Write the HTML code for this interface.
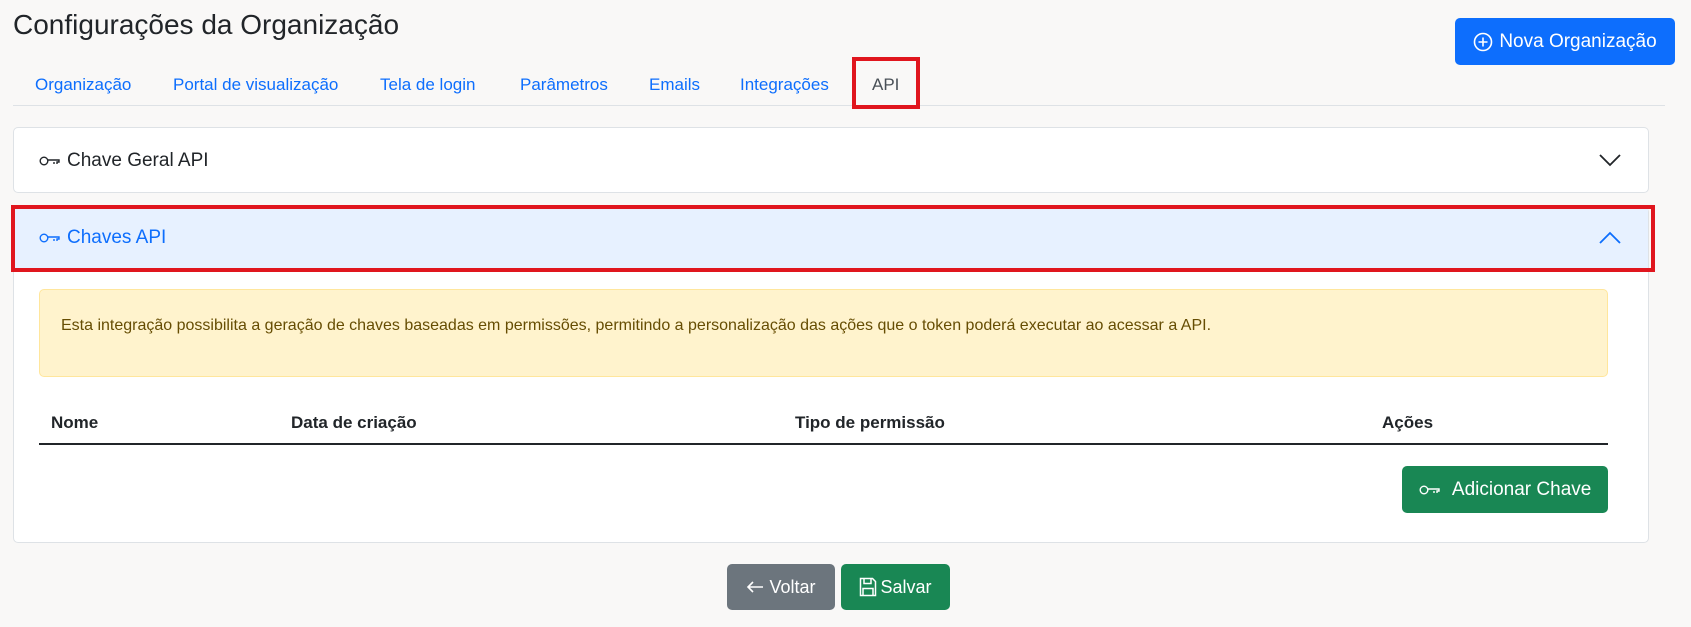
<!DOCTYPE html>
<html><head><meta charset="utf-8"><style>
*{box-sizing:border-box;margin:0;padding:0}
body{width:1691px;height:627px;background:#f9f8f7;font-family:"Liberation Sans",sans-serif;color:#212529;position:relative;overflow:hidden}
.a{position:absolute}
h1{position:absolute;left:13px;top:9px;font-size:28px;font-weight:400}
.btn{position:absolute;border-radius:5px;color:#fff;font-size:19px;display:flex;align-items:center;justify-content:center;gap:6px}
.tab{position:absolute;top:75px;font-size:17px;color:#0d6efd}
.card{position:absolute;background:#fff;border:1px solid #dee2e6;border-radius:5px}
.th{position:absolute;top:413px;font-size:17px;font-weight:700}
</style></head><body>
<h1>Configurações da Organização</h1>
<div class="btn" style="left:1455px;top:18px;width:220px;height:47px;background:#0d6efd">
<svg width="20" height="20" viewBox="0 0 20 20"><circle cx="10" cy="10" r="8.5" fill="none" stroke="#fff" stroke-width="1.6"/><path d="M10 5.5v9M5.5 10h9" stroke="#fff" stroke-width="1.6"/></svg>Nova Organização</div>
<div class="tab" style="left:35px">Organização</div>
<div class="tab" style="left:173px">Portal de visualização</div>
<div class="tab" style="left:380px">Tela de login</div>
<div class="tab" style="left:520px">Parâmetros</div>
<div class="tab" style="left:649px">Emails</div>
<div class="tab" style="left:740px">Integrações</div>
<div class="tab" style="left:872px;color:#495057">API</div>
<div class="a" style="left:13px;top:105px;width:1652px;height:1px;background:#dee2e6"></div>
<div class="a" style="left:852px;top:57px;width:68px;height:52px;border:4px solid #e0161e"></div>

<div class="card" style="left:13px;top:127px;width:1636px;height:66px"></div>
<div class="a" style="left:39px;top:150px;font-size:19px;display:flex;align-items:center;gap:6px">
<svg width="22" height="12" viewBox="0 0 22 12"><circle cx="5" cy="6" r="3.8" fill="none" stroke="#212529" stroke-width="1.4"/><path d="M9 5h11v2h-2v2M15 7v2" fill="none" stroke="#212529" stroke-width="1.4"/></svg>Chave Geral API</div>
<svg class="a" style="left:1599px;top:153px" width="22" height="14" viewBox="0 0 22 14"><path d="M1 2l10 10 10-10" fill="none" stroke="#212529" stroke-width="1.8"/></svg>

<div class="card" style="left:13px;top:207px;width:1636px;height:336px"></div>
<div class="a" style="left:14px;top:208px;width:1634px;height:63px;background:#e7f1ff"></div>
<div class="a" style="left:11px;top:205px;width:1644px;height:67px;border:4px solid #e0161e"></div>
<div class="a" style="left:39px;top:227px;font-size:19px;color:#0d6efd;display:flex;align-items:center;gap:6px">
<svg width="22" height="12" viewBox="0 0 22 12"><circle cx="5" cy="6" r="3.8" fill="none" stroke="#0d6efd" stroke-width="1.4"/><path d="M9 5h11v2h-2v2M15 7v2" fill="none" stroke="#0d6efd" stroke-width="1.4"/></svg>Chaves API</div>
<svg class="a" style="left:1599px;top:231px" width="22" height="14" viewBox="0 0 22 14"><path d="M1 12l10-10 10 10" fill="none" stroke="#0d6efd" stroke-width="1.8"/></svg>

<div class="a" style="left:39px;top:289px;width:1569px;height:88px;background:#fff3cd;border:1px solid #ffe69c;border-radius:5px;color:#664d03;font-size:16px;padding:27px 21px">Esta integração possibilita a geração de chaves baseadas em permissões, permitindo a personalização das ações que o token poderá executar ao acessar a API.</div>
<div class="th" style="left:51px">Nome</div>
<div class="th" style="left:291px">Data de criação</div>
<div class="th" style="left:795px">Tipo de permissão</div>
<div class="th" style="left:1382px">Ações</div>
<div class="a" style="left:39px;top:443px;width:1569px;height:2px;background:#212529"></div>
<div class="btn" style="left:1402px;top:466px;width:206px;height:47px;background:#198754">
<svg width="22" height="12" viewBox="0 0 22 12"><circle cx="5" cy="6" r="3.8" fill="none" stroke="#fff" stroke-width="1.4"/><path d="M9 5h11v2h-2v2M15 7v2" fill="none" stroke="#fff" stroke-width="1.4"/></svg>&nbsp;Adicionar Chave</div>
<div class="btn" style="left:727px;top:564px;width:108px;height:46px;background:#6c757d;font-size:18px;gap:5px">
<svg width="18" height="14" viewBox="0 0 18 14"><path d="M17 7H2M7 2L2 7l5 5" fill="none" stroke="#fff" stroke-width="1.6"/></svg>Voltar</div>
<div class="btn" style="left:841px;top:564px;width:109px;height:46px;background:#198754;font-size:18px;gap:3px">
<svg width="18" height="20" viewBox="0 0 18 20"><path d="M1.5 1.5h12l3 3v14h-15z" fill="none" stroke="#fff" stroke-width="1.5"/><path d="M5 1.5v5h7v-5M4 18.5v-7h10v7" fill="none" stroke="#fff" stroke-width="1.5"/></svg>Salvar</div>
</body></html>
